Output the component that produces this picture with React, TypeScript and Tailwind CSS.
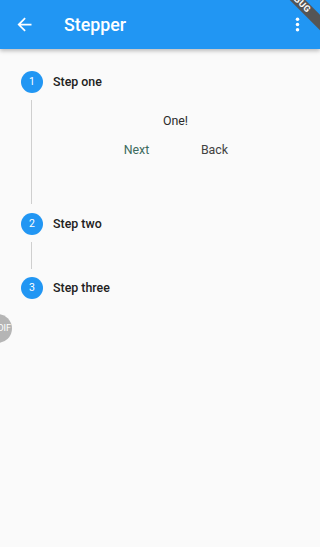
import React from 'react';

const BLUE = 'bg-[#2196f3]';

const StepCircle: React.FC<{ n: number }> = ({ n }) => (
  <div className={`w-[22px] h-[22px] rounded-full ${BLUE} flex items-center justify-center text-white text-[10.5px] leading-none`}>
    {n}
  </div>
);

const StepHeader: React.FC<{ n: number; title: string }> = ({ n, title }) => (
  <div className="flex items-center h-[22px] pl-[21px]">
    <StepCircle n={n} />
    <span className="ml-[10px] text-[12.4px] font-medium text-[#212121] leading-none">{title}</span>
  </div>
);

const App: React.FC = () => {
  return (
    <div
      className="relative w-[320px] h-[547px] overflow-hidden bg-[#fafafa]"
      style={{ fontFamily: 'Roboto, "Liberation Sans", sans-serif' }}
    >
      {/* App bar */}
      <div className={`relative z-10 h-[49px] ${BLUE} flex items-center shadow-[0_2px_4px_rgba(0,0,0,0.25)]`}>
        <svg className="ml-[14px]" width="21" height="21" viewBox="0 0 24 24" fill="white">
          <path d="M20 11H7.83l5.59-5.59L12 4l-8 8 8 8 1.41-1.41L7.83 13H20v-2z" />
        </svg>
        <span className="ml-[29px] text-[17.8px] font-medium text-white leading-none">Stepper</span>
        <svg className="ml-auto mr-[12px]" width="21" height="21" viewBox="0 0 24 24" fill="white">
          <circle cx="12" cy="6" r="2" />
          <circle cx="12" cy="12" r="2" />
          <circle cx="12" cy="18" r="2" />
        </svg>
      </div>

      {/* Stepper */}
      <div className="pt-[22px]">
        <StepHeader n={1} title="Step one" />
        <div className="flex h-[120px]">
          <div className="pl-[31px] flex">
            <div className="w-px mt-[7px] mb-[9px] bg-[#cfcfcf]" />
          </div>
          <div className="flex-1 ml-[21px] mr-[22px] flex flex-col items-center">
            <p className="mt-[20px] text-[12.4px] leading-[16px] text-[#2b2b2b]">One!</p>
            <div className="mt-[5px] flex">
              <button className="w-[78px] h-[33px] text-[12.4px] text-[#3d6b5e]">Next</button>
              <button className="w-[78px] h-[33px] text-[12.4px] text-[#424242]">Back</button>
            </div>
          </div>
        </div>

        <StepHeader n={2} title="Step two" />
        <div className="flex h-[42px]">
          <div className="pl-[31px] flex">
            <div className="w-px mt-[7px] mb-[8px] bg-[#cfcfcf]" />
          </div>
        </div>

        <StepHeader n={3} title="Step three" />
      </div>

      {/* side handle */}
      <div className="absolute left-[-17px] top-[314px] w-[29px] h-[29px] rounded-full bg-[#b5b5b5] flex items-center justify-end pr-[1px]">
        <span className="text-[9px] text-white leading-none">DIF</span>
      </div>

      {/* debug banner */}
      <div className="absolute z-20 left-[238px] top-[-5.5px] w-[120px] h-[11px] rotate-45 bg-[#555555] flex items-center justify-center">
        <span className="text-[9px] font-bold text-white leading-none tracking-[0.5px]">DEBUG</span>
      </div>
    </div>
  );
};

export default App;
